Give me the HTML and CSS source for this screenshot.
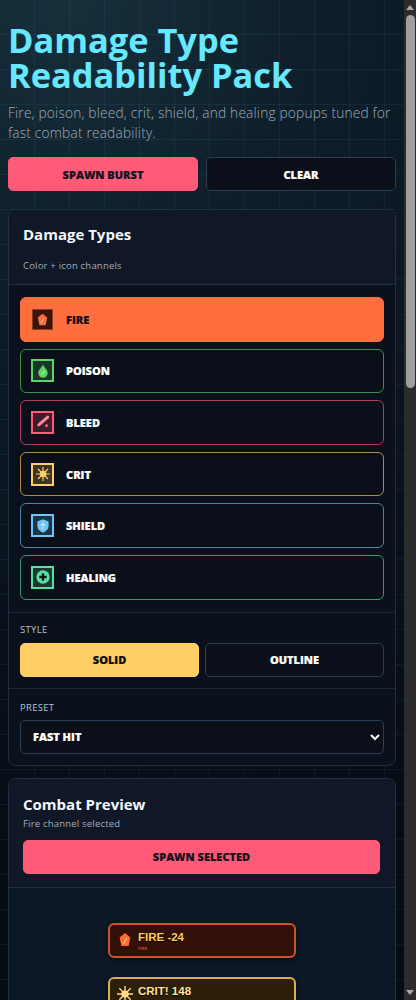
FILE: index.html
```html
<!DOCTYPE html>
<html lang="en">
<head>
<meta charset="utf-8">
<title>Damage Type Readability Pack</title>
<link rel="stylesheet" href="styles.css">
</head>
<body>
<main class="app">
  <header class="hero">
    <h1>Damage Type Readability Pack</h1>
    <p>Fire, poison, bleed, crit, shield, and healing popups tuned for fast combat readability.</p>
    <div class="two">
      <button class="btn btn-pink">SPAWN BURST</button>
      <button class="btn">CLEAR</button>
    </div>
  </header>

  <section class="panel">
    <div class="panel-head head-types">
      <h2>Damage Types</h2>
      <small>Color + icon channels</small>
    </div>
    <div class="rows">
      <button class="row row-active fire"><span class="ico"><svg viewBox="0 0 16 16"><path class="f" d="M8 .8 13.800 5.400 11.800 15H4.200L2.200 5.400Z"/><path class="l" d="M9.800 6.500 6.400 12"/></svg></span>FIRE</button>
      <button class="row poison"><span class="ico"><svg viewBox="0 0 16 16"><path class="f" d="M8 .5C9.500 4 13.400 6.600 13.400 10.400a5.400 5.400 0 0 1-10.800 0C2.600 6.600 6.500 4 8 .5Z"/><path class="l" d="M10 8.200 6.200 12"/></svg></span>POISON</button>
      <button class="row bleed"><span class="ico"><svg viewBox="0 0 16 16"><path class="s" d="M13.400 2.400 3.200 11.400"/><circle class="f" cx="12" cy="12.400" r="1.700"/></svg></span>BLEED</button>
      <button class="row crit"><span class="ico"><svg viewBox="0 0 16 16"><circle class="f" cx="8" cy="8" r="3.800"/><path class="r" d="M8 0v16M0 8h16M2.300 2.300l11.400 11.400M13.700 2.300 2.300 13.700"/></svg></span>CRIT</button>
      <button class="row shield"><span class="ico"><svg viewBox="0 0 16 16"><path class="f" d="M8 .4 14.400 2.800V8c0 3.600-2.800 6-6.400 7.600C4.400 14 1.600 11.600 1.600 8V2.800Z"/><path class="l" d="M8 3.800v7.600M5.400 6.600h5.200"/></svg></span>SHIELD</button>
      <button class="row healing"><span class="ico"><svg viewBox="0 0 16 16"><circle class="f" cx="8" cy="8" r="7.600"/><path class="d" d="M8 3.800v8.400M3.800 8h8.400"/></svg></span>HEALING</button>
    </div>
    <div class="field field-style">
      <label>STYLE</label>
      <div class="two two-tight">
        <button class="btn btn-gold">SOLID</button>
        <button class="btn">OUTLINE</button>
      </div>
    </div>
    <div class="field field-preset">
      <label for="preset">PRESET</label>
      <select id="preset" class="select"><option>FAST HIT</option><option>HEAVY HIT</option></select>
    </div>
  </section>

  <section class="panel panel-preview">
    <div class="panel-head head-preview">
      <h2>Combat Preview</h2>
      <small>Fire channel selected</small>
      <button class="btn btn-pink btn-wide">SPAWN SELECTED</button>
    </div>
    <div class="stage">
      <div class="pop pop-fire"><svg viewBox="0 0 16 16"><path class="f" d="M8 1 13.400 5.600 11.600 14H4.400L2.600 5.600Z"/><path class="l" d="M9.600 6.500 6.600 11.500"/></svg><div><b>FIRE -24</b><i>FIRE</i></div></div>
      <div class="pop pop-crit"><svg viewBox="0 0 16 16"><circle class="f" cx="8" cy="8" r="3.600"/><path class="r" d="M8 0v16M0 8h16M2.300 2.300l11.400 11.400M13.700 2.300 2.300 13.700"/></svg><div><b>CRIT! 148</b><i>CRIT</i></div></div>
      <div class="pop pop-poison"><svg viewBox="0 0 16 16"><path class="f" d="M8 1.800C9.500 4.400 12.400 6.800 12.400 10a4.400 4.400 0 0 1-8.800 0C3.600 6.800 6.500 4.400 8 1.800Z"/></svg><div><b>POISON -12</b><i>POISON</i></div></div>
      <div class="pop pop-shield"><svg viewBox="0 0 16 16"><path class="f" d="M8 1.800 13.200 3.600V8c0 3-2.200 5.200-5.200 6.400C5 13.200 2.800 11 2.800 8V3.600Z"/></svg><div><b>SHIELD +40</b><i>SHIELD</i></div></div>
    </div>
  </section>
</main>
<aside class="scrollbar" aria-hidden="true">
  <span class="arrow arrow-up"></span>
  <span class="track"><span class="thumb"></span></span>
  <span class="arrow arrow-down"></span>
</aside>
</body>
</html>
```
FILE: styles.css
```css
* { box-sizing: border-box; }
html { background: #060c14; color-scheme: dark; }
html::-webkit-scrollbar { display: none; }
body {
  margin: 0;
  padding-right: 12px;
  font-family: "Open Sans", "Noto Sans", sans-serif;
  color: #fff;
  background-color: #060c14;
  background-image:
    linear-gradient(rgba(120, 190, 220, .07) 1px, transparent 1px),
    linear-gradient(90deg, rgba(120, 190, 220, .07) 1px, transparent 1px),
    radial-gradient(circle at 15% 0, #16303c 0, #0e1e2a 260px, #08111b 620px, #060c14 900px);
  background-size: 35px 35px, 35px 35px, 100% 100%;
  background-position: -1px -1px, -1px -1px, 0 0;
}
.scrollbar {
  position: fixed;
  top: 0;
  right: 0;
  bottom: 0;
  width: 12px;
  display: flex;
  flex-direction: column;
  background: #2c2c2c;
}
.arrow { flex: none; height: 15px; display: flex; align-items: center; justify-content: center; }
.arrow::before { content: ""; width: 0; height: 0; border-left: 4px solid transparent; border-right: 4px solid transparent; }
.arrow-up::before { border-bottom: 5px solid #a8a8a8; }
.arrow-down::before { border-top: 5px solid #a8a8a8; }
.track { flex: 1; display: block; }
.thumb { display: block; height: 373px; margin: 0 1.5px; border-radius: 5px; background: #9f9f9f; }

.app { padding: 22px 8px 24px; }
.hero h1 {
  margin: 0;
  font-size: 34.4px;
  line-height: 35px;
  font-weight: 700;
  color: #67e8ff;
}
.hero p {
  margin: 11px 0 0;
  font-size: 13.7px;
  line-height: 20px;
  font-weight: 300;
  color: #a0aebc;
  letter-spacing: .2px;
}
.two { display: grid; grid-template-columns: 1fr 1fr; gap: 8px; margin-top: 14px; }
.two-tight { gap: 6px; margin-top: 7px; }
.btn {
  height: 34px;
  border: 1px solid #2a3f57;
  border-radius: 5px;
  background: #0a0f19;
  color: #fff;
  font: 800 11px "Open Sans", sans-serif;
  -webkit-text-stroke: .2px currentColor;
}
.btn-pink { background: #ff5b78; border-color: #ff5b78; color: #14121f; }
.btn-gold { background: #ffcf66; border-color: #ffcf66; color: #0d0f14; }
.btn-wide { display: block; width: 100%; }
.panel {
  margin-top: 18px;
  border: 1px solid #1f3044;
  border-radius: 8px;
  background: #0a111d;
}
.panel-head {
  background: #101827;
  border-bottom: 1px solid #1f3044;
  border-radius: 8px 8px 0 0;
}
.head-types { padding: 14px 14px 12px; height: 75px; }
.head-preview { padding: 15px 15px 13px 14px; height: 109px; }
h2 { margin: 0; font-size: 15px; line-height: 20px; font-weight: 700; color: #f4f7fb; }
small { display: block; font-size: 9.5px; line-height: 13px; color: #a0aebd; letter-spacing: .2px; }
.head-types small { margin-top: 15px; }
.head-preview small { margin-top: 3px; }
.head-preview .btn-wide { margin-top: 10px; }
.rows { display: flex; flex-direction: column; gap: 7px; padding: 12px 11px 12px; border-bottom: 1px solid #1a2a3c; }
.row {
  display: flex;
  align-items: center;
  gap: 12px;
  height: 44.6px;
  padding: 0 10px;
  border: 1px solid;
  border-radius: 6px;
  background: #0a0f19;
  color: #fff;
  font: 800 11px "Open Sans", sans-serif;
  -webkit-text-stroke: .2px currentColor;
  text-align: left;
}
.ico { display: block; width: 23px; height: 23px; border: 2px solid; padding: 2.5px; flex: none; }
.ico svg { display: block; width: 100%; height: 100%; overflow: visible; }
.f { stroke: none; }
.l { fill: none; stroke-width: 1.2; stroke-linecap: round; }
.s { fill: none; stroke-width: 3.4; stroke-linecap: round; }
.r { fill: none; stroke-width: 1.4; }
.d { fill: none; stroke: #0c1a16; stroke-width: 2.6; }
.fire { --c: #ff6b3d; }
.poison { --c: #59d364; }
.bleed { --c: #ff5b78; }
.crit { --c: #ffcf66; }
.shield { --c: #6cc6f8; }
.healing { --c: #58e0a0; }
.row { border-color: color-mix(in srgb, var(--c) 65%, #0a0f19); }
.ico { border-color: var(--c); background: color-mix(in srgb, var(--c) 20%, #0a0f19); }
.ico .f { fill: var(--c); }
.ico .s, .ico .r { stroke: var(--c); }
.poison .l { stroke: #bff5b0; }
.shield .l { stroke: #d6f0ff; }
.fire .l { stroke: #ffd28a; }
.bleed .s { stroke: #ff8499; }
.row-active { background: #ff6f3e; border-color: #ff6f3e; color: #14101a; }
.row-active .ico { width: 21px; height: 21px; margin: 0 1px; border-width: 1px; border-color: #8a3f22; background: #3a150d; padding: 3px; }
.field { padding: 0 11px; }
.field label { display: block; font-size: 9.5px; line-height: 13px; color: #b4c1cf; letter-spacing: .3px; }
.field-style { padding-top: 10px; padding-bottom: 11px; border-bottom: 1px solid #1a2a3c; }
.field-preset { padding-top: 12px; padding-bottom: 11px; }
.select {
  display: block;
  width: 100%;
  height: 34px;
  margin-top: 6px;
  padding: 0 8px;
  border: 1px solid #2a3f57;
  border-radius: 5px;
  background: #0a0f19;
  color: #fff;
  font: 800 11px "Open Sans", sans-serif;
  -webkit-text-stroke: .2px currentColor;
}
.panel-preview { margin-top: 12px; }
.stage {
  display: flex;
  flex-direction: column;
  align-items: center;
  gap: 19px;
  padding-top: 35px;
  min-height: 1700px;
  background: #0c1826;
  border-radius: 0 0 8px 8px;
}
.pop {
  display: flex;
  align-items: center;
  gap: 5px;
  width: 188px;
  height: 35px;
  padding: 0 7px;
  border: 2px solid;
  border-radius: 6px;
  box-shadow: 0 2px 5px rgba(0, 0, 0, .5);
}
.pop svg { width: 16px; height: 16px; flex: none; overflow: visible; }
.pop div { display: flex; flex-direction: column; padding-top: 1px; }
.pop b { font: 700 11.5px/14px "Liberation Sans", sans-serif; text-shadow: 0 1px 1px #000; }
.pop i { font: 700 4px/6px "Liberation Sans", sans-serif; margin-top: 2px; }
.pop-fire { background: #331109; border-color: #c9552f; }
.pop-fire .f { fill: #ff6b3d; }
.pop-fire .l { stroke: #ffcf66; }
.pop-fire b { color: #ffcf66; }
.pop-fire i { color: #c9452c; }
.pop-crit { background: #2e1f08; border-color: #d8ae55; }
.pop-crit .f { fill: #ffdc85; }
.pop-crit .r { stroke: #ffdc85; }
.pop-crit b { color: #ffe3a0; }
.pop-crit i { color: #c99a3c; }
.pop-poison { background: #0e2812; border-color: #4fae57; }
.pop-poison .f { fill: #59d364; }
.pop-poison b { color: #bdf5b6; }
.pop-poison i { color: #4fae57; }
.pop-shield { background: #0b2436; border-color: #5aa8d6; }
.pop-shield .f { fill: #6cc6f8; }
.pop-shield b { color: #cdeeff; }
.pop-shield i { color: #5aa8d6; }
```
